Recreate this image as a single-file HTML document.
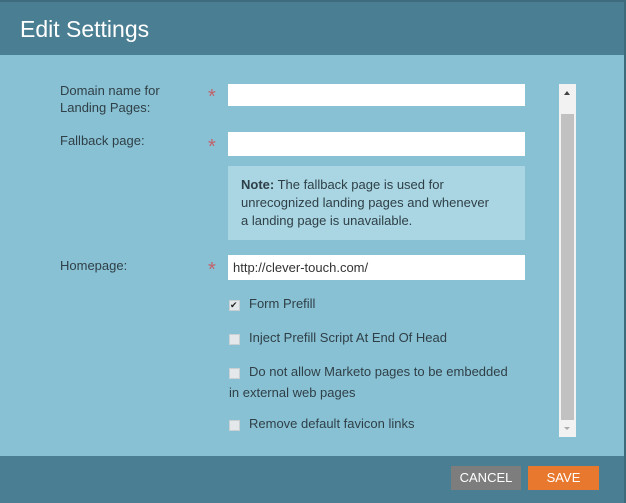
<!DOCTYPE html><html><head><style>
body{margin:0;width:626px;height:503px;overflow:hidden;font-family:"Liberation Sans",sans-serif;background:#88c1d3;position:relative}
.hd{position:absolute;left:0;top:0;width:626px;height:55px;background:#4a7f93;border-top:2px solid #3e6c7e;box-sizing:border-box}
.hd span{position:absolute;left:20px;top:14px;color:#fff;font-size:23px}
.ft{position:absolute;left:0;top:456px;width:626px;height:47px;background:#4a7f93}
.r{position:absolute;right:0;top:0;width:2px;height:503px;background:#3d6b7c}
.l{position:absolute;color:#2f3f47;font-size:13px;line-height:17px;white-space:nowrap}
.in{position:absolute;left:228px;width:297px;background:#fff}
.st{position:absolute;left:208px;color:#c3626b;font-size:20px}
.cb{position:absolute;left:229px;width:9px;height:9px;background:#e4e8ea;border:1px solid #c9d0d4}
.b{position:absolute;top:466px;height:24px;color:#fff;font-size:13px;text-align:center;line-height:24px}
</style></head><body>
<div class="hd"><span>Edit Settings</span></div>
<div class="l" style="left:60px;top:82px">Domain name for<br>Landing Pages:</div>
<div class="st" style="top:86px">*</div><div class="in" style="top:84px;height:22px"></div>
<div class="l" style="left:60px;top:132px">Fallback page:</div>
<div class="st" style="top:136px">*</div><div class="in" style="top:132px;height:24px"></div>
<div class="l" style="left:228px;top:166px;width:297px;height:74px;background:#a9d6e2;padding:10px 0 0 13px;box-sizing:border-box;line-height:18px"><b>Note:</b> The fallback page is used for<br>unrecognized landing pages and whenever<br>a landing page is unavailable.</div>
<div class="l" style="left:60px;top:257px">Homepage:</div>
<div class="st" style="top:259px">*</div><div class="in" style="top:255px;height:25px"><div class="l" style="left:5px;top:4px;color:#333">http://clever-touch.com/</div></div>
<div class="cb" style="top:300px;font-size:9px;line-height:9px;color:#222">✔</div><div class="l" style="left:249px;top:295px">Form Prefill</div>
<div class="cb" style="top:334px"></div><div class="l" style="left:249px;top:329px">Inject Prefill Script At End Of Head</div>
<div class="cb" style="top:368px"></div><div class="l" style="left:249px;top:363px">Do not allow Marketo pages to be embedded</div><div class="l" style="left:229px;top:384px">in external web pages</div>
<div class="cb" style="top:420px"></div><div class="l" style="left:249px;top:415px">Remove default favicon links</div>
<div style="position:absolute;left:559px;top:84px;width:17px;height:353px;background:#f2f2f2"><div style="position:absolute;left:2px;top:30px;width:13px;height:306px;background:#c1c1c1"></div><div style="position:absolute;left:5px;top:7px;border:3px solid transparent;border-bottom:4px solid #444;border-top:0"></div><div style="position:absolute;left:5px;top:343px;border:3px solid transparent;border-top:3px solid #aaa;border-bottom:0"></div></div>
<div class="ft"></div>
<div class="b" style="left:451px;width:70px;background:#7d7d7d">CANCEL</div>
<div class="b" style="left:528px;width:71px;background:#e8782d">SAVE</div>
<div class="r"></div>
</body></html>
